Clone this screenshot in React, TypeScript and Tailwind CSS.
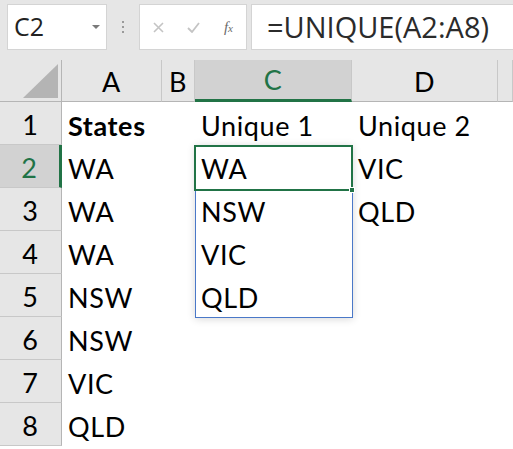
import React from 'react';

const headers = ['A', 'B', 'C', 'D', ''];

// each row: [A, B, C, D]
const rows: string[][] = [
  ['States', '', 'Unique 1', 'Unique 2'],
  ['WA', '', 'WA', 'VIC'],
  ['WA', '', 'NSW', 'QLD'],
  ['WA', '', 'VIC', ''],
  ['NSW', '', 'QLD', ''],
  ['NSW', '', '', ''],
  ['VIC', '', '', ''],
  ['QLD', '', '', ''],
];

const cellFont = "font-['Lato','Liberation_Sans',sans-serif] text-[27px] leading-[32px] tracking-[0.6px]";

const NameBox: React.FC = () => (
  <div className="ml-[7px] flex h-[46px] w-[100px] items-center justify-between border border-[#d4d4d4] bg-white pl-[6px] pr-[6px]">
    <span className="font-['Open_Sans',sans-serif] text-[25px] text-[#222]">C2</span>
    <svg width="8" height="4" viewBox="0 0 8 4">
      <path d="M0 0h8L4 4z" fill="#7a7a7a" />
    </svg>
  </div>
);

const FormulaButtons: React.FC = () => (
  <div className="flex h-[46px] w-[108px] items-center justify-between border border-[#d4d4d4] bg-white px-[13px]">
    <svg width="11" height="11" viewBox="0 0 11 11">
      <path d="M1 1l9 9M10 1l-9 9" stroke="#c4c4c4" strokeWidth="1.6" />
    </svg>
    <svg width="13" height="11" viewBox="0 0 13 11">
      <path d="M1 6l4 4 7-9" stroke="#c4c4c4" strokeWidth="1.8" fill="none" />
    </svg>
    <span className="font-['Liberation_Serif',serif] text-[15px] italic leading-none text-[#6b6b6b]">
      f<span className="text-[11px]">x</span>
    </span>
  </div>
);

export default function App() {
  return (
    <div className="h-[449px] w-[513px] overflow-hidden bg-white">
      {/* formula bar */}
      <div className="flex h-[60px] items-start bg-[#e6e6e6] pt-[4px]">
        <NameBox />
        <div className="flex h-[46px] w-[32px] flex-col items-center justify-center gap-[3px]">
          <span className="h-[2px] w-[2px] bg-[#9a9a9a]" />
          <span className="h-[2px] w-[2px] bg-[#9a9a9a]" />
          <span className="h-[2px] w-[2px] bg-[#9a9a9a]" />
        </div>
        <FormulaButtons />
        <div className="ml-[4px] flex h-[46px] flex-1 items-center border border-r-0 border-[#d4d4d4] bg-white pl-[15px]">
          <span className="font-['Open_Sans',sans-serif] text-[29px] whitespace-nowrap text-[#2b2b2b]">=UNIQUE(A2:A8)</span>
        </div>
      </div>

      {/* sheet */}
      <div className="relative grid grid-cols-[62px_100px_33px_157px_146px_1fr] grid-rows-[42px_repeat(8,43px)]">
        {/* corner */}
        <div className="relative border-r border-b border-[#b5b5b5] bg-[#e6e6e6]">
          <svg className="absolute right-[3px] bottom-[3px]" width="35" height="34" viewBox="0 0 35 34">
            <path d="M35 0V34H0z" fill="#b4b4b4" />
          </svg>
        </div>
        {headers.map((h, i) => {
          const active = h === 'C';
          return (
            <div
              key={i}
              className={`flex items-end justify-center pb-[3px] ${cellFont} ${
                active
                  ? 'border-b-[3px] border-r border-b-[#217346] border-r-[#c8c8c8] bg-[#d2d2d2] text-[#217346]'
                  : 'border-r border-b border-r-[#c8c8c8] border-b-[#b5b5b5] bg-[#e6e6e6] text-black'
              }`}
            >
              {h}
            </div>
          );
        })}

        {rows.map((r, ri) => {
          const active = ri === 1;
          return (
            <React.Fragment key={ri}>
              <div
                className={`flex items-end justify-center pb-[3px] ${cellFont} ${
                  active
                    ? 'border-r-[3px] border-b border-r-[#217346] border-b-[#c8c8c8] bg-[#d2d2d2] text-[#217346]'
                    : 'border-r border-b border-r-[#b5b5b5] border-b-[#c8c8c8] bg-[#e6e6e6] text-black'
                }`}
              >
                {ri + 1}
              </div>
              {r.map((v, ci) => (
                <div
                  key={ci}
                  className={`flex items-end overflow-visible whitespace-nowrap pb-[3px] pl-[6px] text-black ${cellFont} ${
                    ri === 0 && ci === 0 ? 'font-bold' : ''
                  }`}
                >
                  {v}
                </div>
              ))}
              <div />
            </React.Fragment>
          );
        })}

        {/* spill range C2:C5 */}
        <div className="pointer-events-none absolute top-[85px] left-[195px] h-[173px] w-[158px] border border-[#4a78c8] shadow-[0_1px_8px_rgba(0,0,0,0.16)]" />
        {/* active cell C2 */}
        <div className="pointer-events-none absolute top-[85px] left-[194px] h-[46px] w-[159px] border-2 border-[#217346]">
          <span className="absolute -right-[4px] -bottom-[4px] h-[6px] w-[6px] border border-white bg-[#217346]" />
        </div>
      </div>
    </div>
  );
}
